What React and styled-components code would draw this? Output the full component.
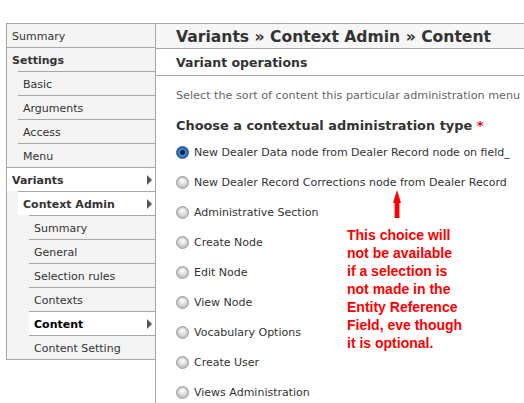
import React from "react";
import styled, { createGlobalStyle } from "styled-components";

const GlobalStyle = createGlobalStyle`
  html, body {
    margin: 0;
    padding: 0;
    background: #fff;
  }
  body {
    font-family: "DejaVu Sans", Verdana, sans-serif;
    font-size: 11px;
    color: #333;
  }
`;

const menu = [
  { label: "Summary" },
  {
    label: "Settings",
    bold: true,
    children: [{ label: "Basic" }, { label: "Arguments" }, { label: "Access" }, { label: "Menu" }],
  },
  {
    label: "Variants",
    bold: true,
    active: true,
    children: [
      {
        label: "Context Admin",
        bold: true,
        active: true,
        children: [
          { label: "Summary" },
          { label: "General" },
          { label: "Selection rules" },
          { label: "Contexts" },
          { label: "Content", bold: true, active: true, dark: true },
          { label: "Content Setting" },
        ],
      },
    ],
  },
];

const options = [
  "New Dealer Data node from Dealer Record node on field_",
  "New Dealer Record Corrections node from Dealer Record",
  "Administrative Section",
  "Create Node",
  "Edit Node",
  "View Node",
  "Vocabulary Options",
  "Create User",
  "Views Administration",
];

const MenuList = ({ items, level }) => (
  <List $level={level}>
    {items.map((item, i) => (
      <Item key={i} $top={level > 0 || i > 0}>
        <Row $active={item.active} $bold={item.bold} $dark={item.dark}>
          <span>{item.label}</span>
          {item.active && <Arrow />}
        </Row>
        {item.children && <MenuList items={item.children} level={level + 1} />}
      </Item>
    ))}
  </List>
);

const App = () => {
  return (
    <Page>
      <GlobalStyle />
      <Sidebar>
        <MenuList items={menu} level={0} />
      </Sidebar>
      <Main>
        <TitleBar>Variants » Context Admin » Content</TitleBar>
        <SubBar>Variant operations</SubBar>
        <Body>
          <Description>Select the sort of content this particular administration menu</Description>
          <Heading>
            Choose a contextual administration type <Req>*</Req>
          </Heading>
          <Options>
            {options.map((o, i) => (
              <Option key={i}>
                <Radio $checked={i === 0} />
                <span>{o}</span>
              </Option>
            ))}
          </Options>
        </Body>
        <NoteArrow width="8" height="28" viewBox="0 0 8 28">
          <polygon points="4,0 8,13 6.4,13 6.4,28 1.6,28 1.6,13 0,13" fill="#f00" />
        </NoteArrow>
        <Note>
          This choice will
          <br />
          not be available
          <br />
          if a selection is
          <br />
          not made in the
          <br />
          Entity Reference
          <br />
          Field, eve though
          <br />
          it is optional.
        </Note>
      </Main>
    </Page>
  );
};

const Page = styled.div`
  display: flex;
  align-items: flex-start;
  height: 100vh;
  padding-top: 23px;
  box-sizing: border-box;
  overflow: hidden;
`;

const Sidebar = styled.nav`
  margin-left: 6px;
  width: 149px;
  flex-shrink: 0;
  box-sizing: border-box;
  background: #f4f4f4;
  border: 1px solid #a8a8a8;
  border-right: none;
`;

const List = styled.ul`
  list-style: none;
  margin: 0 0 0 ${(p) => (p.$level > 0 ? 11 : 0)}px;
  padding: 0;
`;

const Item = styled.li`
  border-top: ${(p) => (p.$top ? "1px solid #a8a8a8" : "none")};
`;

const Row = styled.div`
  display: flex;
  align-items: center;
  justify-content: space-between;
  box-sizing: border-box;
  height: 23px;
  padding: 2px 3px 0 5px;
  background: ${(p) => (p.$active ? "#fff" : "transparent")};
  font-weight: ${(p) => (p.$bold ? "bold" : "normal")};
  color: ${(p) => (p.$dark ? "#000" : "#333")};
  white-space: nowrap;
`;

const Arrow = styled.span`
  margin-bottom: 2px;
  width: 0;
  height: 0;
  border-top: 5px solid transparent;
  border-bottom: 5px solid transparent;
  border-left: 5px solid #555;
`;

const Main = styled.div`
  position: relative;
  flex: 1;
  align-self: stretch;
  min-width: 0;
  border-left: 1px solid #a8a8a8;
`;

const TitleBar = styled.h1`
  margin: 0;
  height: 23px;
  padding: 1px 0 0 20px;
  border-top: 1px solid #a8a8a8;
  border-bottom: 1px solid #a8a8a8;
  background: #f6f6f6;
  font-size: 15.6px;
  line-height: 25px;
  font-weight: bold;
  color: #333;
  white-space: nowrap;
  overflow: hidden;
`;

const SubBar = styled.h2`
  margin: 0;
  height: 25px;
  padding: 1px 0 0 20px;
  border-bottom: 1px solid #a8a8a8;
  font-size: 12.5px;
  line-height: 26px;
  font-weight: bold;
  color: #333;
  white-space: nowrap;
  overflow: hidden;
`;

const Body = styled.div`
  padding: 11px 0 0 20px;
`;

const Description = styled.p`
  margin: 0;
  line-height: 18px;
  font-size: 11.2px;
  color: #666;
  white-space: nowrap;
`;

const Heading = styled.h3`
  margin: 12px 0 0;
  line-height: 18px;
  font-size: 12.9px;
  font-weight: bold;
  color: #333;
  white-space: nowrap;
`;

const Req = styled.span`
  color: #e00;
`;

const Options = styled.div`
  margin-top: 2px;
  display: flex;
  flex-direction: column;
`;

const Option = styled.label`
  display: flex;
  align-items: center;
  gap: 5px;
  height: 30px;
  white-space: nowrap;
  color: #333;
`;

const Radio = styled.span`
  flex-shrink: 0;
  width: 13px;
  height: 13px;
  border-radius: 50%;
  box-sizing: border-box;
  border: 1px solid ${(p) => (p.$checked ? "#34597f" : "#9c9c9c")};
  background: ${(p) =>
    p.$checked
      ? "radial-gradient(circle at 50% 50%, #10243c 0 2px, #3f8fd8 3px, #1b5ea6 6px)"
      : "radial-gradient(circle at 50% 35%, #fdfdfd 0, #e6e6e6 3px, #c4c4c4 6px)"};
  box-shadow: inset 0 1px 1px rgba(0, 0, 0, 0.15);
`;

const NoteArrow = styled.svg`
  position: absolute;
  left: 237px;
  top: 167px;
`;

const Note = styled.div`
  position: absolute;
  left: 191px;
  top: 203px;
  font-family: "Liberation Sans", Arial, sans-serif;
  font-size: 14px;
  font-weight: bold;
  line-height: 18px;
  color: #f00;
  white-space: nowrap;
`;

export default App;
